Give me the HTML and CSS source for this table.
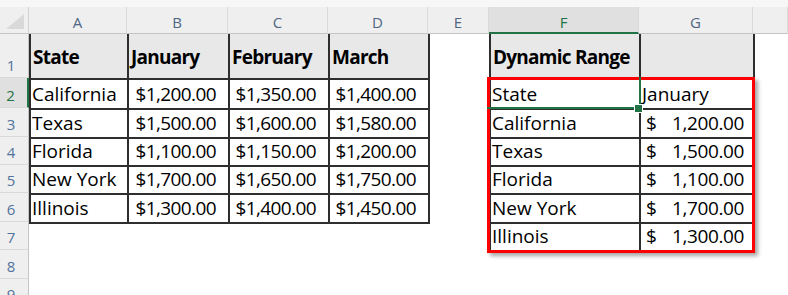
FILE: index.html
```html
<!DOCTYPE html>
<html lang="en">
<head>
<meta charset="utf-8">
<title>Dynamic Range</title>
<link rel="stylesheet" href="styles.css">
</head>
<body>
<div class="sheet">
  <div class="strip"></div>

  <div class="corner"><span class="tri"></span></div>
  <div class="ch">A</div>
  <div class="ch">B</div>
  <div class="ch">C</div>
  <div class="ch">D</div>
  <div class="ch">E</div>
  <div class="ch sel">F</div>
  <div class="ch">G</div>
  <div class="ch"></div>

  <div class="rh">1</div>
  <div class="c th">State</div>
  <div class="c th">January</div>
  <div class="c th">February</div>
  <div class="c th last">March</div>
  <div class="c"></div>
  <div class="c th">Dynamic Range</div>
  <div class="c th last"></div>
  <div class="c"></div>

  <div class="rh sel">2</div>
  <div class="c td">California</div>
  <div class="c td num">$1,200.00</div>
  <div class="c td num">$1,350.00</div>
  <div class="c td num last">$1,400.00</div>
  <div class="c"></div>
  <div class="c td">State</div>
  <div class="c td last">January</div>
  <div class="c"></div>

  <div class="rh">3</div>
  <div class="c td">Texas</div>
  <div class="c td num">$1,500.00</div>
  <div class="c td num">$1,600.00</div>
  <div class="c td num last">$1,580.00</div>
  <div class="c"></div>
  <div class="c td">California</div>
  <div class="c td acct last"><span>$</span><span>1,200.00</span></div>
  <div class="c"></div>

  <div class="rh">4</div>
  <div class="c td">Florida</div>
  <div class="c td num">$1,100.00</div>
  <div class="c td num">$1,150.00</div>
  <div class="c td num last">$1,200.00</div>
  <div class="c"></div>
  <div class="c td">Texas</div>
  <div class="c td acct last"><span>$</span><span>1,500.00</span></div>
  <div class="c"></div>

  <div class="rh">5</div>
  <div class="c td">New York</div>
  <div class="c td num">$1,700.00</div>
  <div class="c td num">$1,650.00</div>
  <div class="c td num last">$1,750.00</div>
  <div class="c"></div>
  <div class="c td">Florida</div>
  <div class="c td acct last"><span>$</span><span>1,100.00</span></div>
  <div class="c"></div>

  <div class="rh">6</div>
  <div class="c td bot">Illinois</div>
  <div class="c td num bot">$1,300.00</div>
  <div class="c td num bot">$1,400.00</div>
  <div class="c td num bot last">$1,450.00</div>
  <div class="c"></div>
  <div class="c td">New York</div>
  <div class="c td acct last"><span>$</span><span>1,700.00</span></div>
  <div class="c"></div>

  <div class="rh">7</div>
  <div class="c"></div>
  <div class="c"></div>
  <div class="c"></div>
  <div class="c"></div>
  <div class="c"></div>
  <div class="c td bot">Illinois</div>
  <div class="c td acct bot last"><span>$</span><span>1,300.00</span></div>
  <div class="c"></div>

  <div class="rh">8</div>
  <div class="c"></div>
  <div class="c"></div>
  <div class="c"></div>
  <div class="c"></div>
  <div class="c"></div>
  <div class="c"></div>
  <div class="c"></div>
  <div class="c"></div>

  <div class="rh">9</div>
  <div class="c"></div>
  <div class="c"></div>
  <div class="c"></div>
  <div class="c"></div>
  <div class="c"></div>
  <div class="c"></div>
  <div class="c"></div>
  <div class="c"></div>

  <div class="redbox"></div>
  <div class="selbox"></div>
  <div class="handle"></div>
</div>
</body>
</html>
```

FILE: styles.css
```css
* {
  box-sizing: border-box;
  margin: 0;
  padding: 0;
}

html, body {
  margin: 0;
  background: #ffffff;
  overflow: hidden;
}

body {
  font-family: "Open Sans", "Noto Sans", sans-serif;
}

.sheet {
  position: relative;
  display: grid;
  grid-template-columns: 29px 98px 101px 100px 100px 61px 150px 114px 1fr;
  grid-template-rows: 7px 27px 44px 30px 29px 28px 28px 29px 28px 29px 28px;
  width: 788px;
  height: 295px;
  overflow: hidden;
}

.strip {
  grid-column: 1 / -1;
  background: #f7f7f7;
}

.corner {
  background: #efefef;
  border-right: 1px solid #d2d2d2;
  border-bottom: 1px solid #c4c4c4;
  display: flex;
  justify-content: flex-end;
  align-items: flex-end;
  padding: 0 4px 4px 0;
}

.tri {
  display: block;
  width: 18px;
  height: 15px;
  background: #d9d9d9;
  clip-path: polygon(100% 0, 100% 100%, 0 100%);
}

.ch {
  background: #efefef;
  border-right: 1px solid #dadada;
  border-bottom: 1px solid #c4c4c4;
  display: flex;
  justify-content: center;
  align-items: flex-end;
  padding-bottom: 3px;
  font-size: 15px;
  line-height: 1;
  color: #4e6683;
}

.ch.sel {
  background: #e0e0e0;
  color: #217346;
  border-bottom: 2px solid #217346;
  padding-bottom: 2px;
}

.rh {
  background: #efefef;
  border-right: 1px solid #c4c4c4;
  border-bottom: 1px solid #dadada;
  display: flex;
  justify-content: center;
  align-items: flex-end;
  padding: 0 6px 4px 0;
  font-size: 15px;
  line-height: 1;
  color: #52739b;
}

.rh.sel {
  background: #e0e0e0;
  color: #217346;
  border-right: 2px solid #217346;
}

.c {
  display: flex;
  align-items: flex-end;
  white-space: nowrap;
  overflow: hidden;
  font-size: 19px;
  line-height: 1;
  color: #000000;
}

.th {
  background: #e8e8e8;
  font-weight: 700;
  letter-spacing: -0.75px;
  padding: 0 0 11px 2px;
  border-left: 2px solid #2e2e2e;
}

.td {
  border-left: 2px solid #2e2e2e;
  border-top: 2px solid #2e2e2e;
  padding: 0 0 4px 1px;
}

.num {
  justify-content: flex-end;
  padding-right: 12px;
  letter-spacing: -0.6px;
}

.acct {
  justify-content: space-between;
  padding-left: 5px;
  padding-right: 9px;
  letter-spacing: -0.4px;
}

.last {
  border-right: 2px solid #2e2e2e;
  margin-right: -2px;
}

.bot {
  border-bottom: 2px solid #2e2e2e;
  margin-bottom: -2px;
}

.redbox {
  position: absolute;
  left: 487px;
  top: 77px;
  width: 268px;
  height: 176px;
  border: 3px solid #ff0000;
  box-shadow: 3px 3px 4px rgba(0, 0, 0, 0.35);
  pointer-events: none;
}

.selbox {
  position: absolute;
  left: 487px;
  top: 77px;
  width: 154px;
  height: 32px;
  border-right: 2px solid #217346;
  border-bottom: 2px solid #217346;
  pointer-events: none;
}

.handle {
  position: absolute;
  left: 635px;
  top: 105px;
  width: 7px;
  height: 7px;
  background: #217346;
  box-shadow: 0 0 0 1px #ffffff;
}
```
